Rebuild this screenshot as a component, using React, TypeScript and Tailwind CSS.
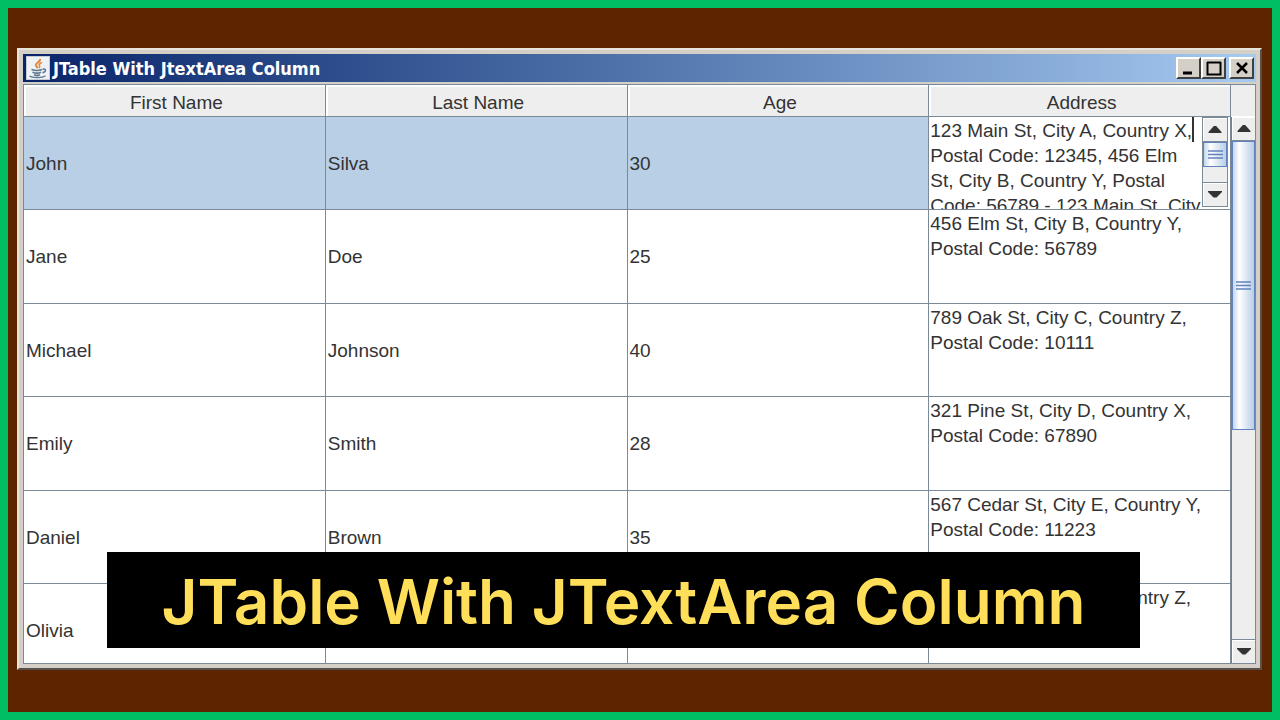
import React, { useState } from 'react';
import clsx from 'clsx';

type Person = {
    first: string;
    last?: string;
    age?: number;
    address: string;
}

const columns = ['First Name', 'Last Name', 'Age', 'Address'];

const people: Person[] = [
    { first: 'John', last: 'Silva', age: 30, address: '123 Main St, City A, Country X, Postal Code: 12345, 456 Elm St, City B, Country Y, Postal Code: 56789 - 123 Main St, City A, Country X' },
    { first: 'Jane', last: 'Doe', age: 25, address: '456 Elm St, City B, Country Y, Postal Code: 56789' },
    { first: 'Michael', last: 'Johnson', age: 40, address: '789 Oak St, City C, Country Z, Postal Code: 10111' },
    { first: 'Emily', last: 'Smith', age: 28, address: '321 Pine St, City D, Country X, Postal Code: 67890' },
    { first: 'Daniel', last: 'Brown', age: 35, address: '567 Cedar St, City E, Country Y, Postal Code: 11223' },
    { first: 'Olivia', address: '890 Birch St, City F, Country Z,' },
];

function JavaIcon() {
    return (
        <svg width="24" height="24" viewBox="0 0 24 24" fill="none" aria-hidden="true">
            <rect x="0.5" y="0.5" width="23" height="23" fill="#eef1f5" stroke="#c5cbd6" />
            <path d="M14 3c1 3-5 4-4 6.500.3.900 1.300 1.600 1.600 2.700" stroke="#e58a3c" strokeWidth="2" />
            <path d="M16 6.500c-2 .8-3.500 1.800-2.500 3.200.6 1 .2 1.800-.6 2.500" stroke="#e58a3c" strokeWidth="1.600" />
            <path d="M5.500 13.500c3 1.200 8 1.200 10.500 0M6.500 16.200c2.500 1 6.500 1 8.500 0M8 18.700c1.800.7 4.500.7 6 0" stroke="#5d7890" strokeWidth="1.600" />
            <path d="M16.500 13.200c4-.9 4 2.600 0 3.500" stroke="#5d7890" strokeWidth="1.500" />
            <path d="M3.500 20c3 2 13 2 16-.3" stroke="#5d7890" strokeWidth="1.400" />
        </svg>
    )
}

function FrameButton({ label, children }: { label: string; children: React.ReactNode }) {
    return (
        <button
            type="button"
            aria-label={label}
            className="flex h-[22px] w-[25px] items-center justify-center border-2 border-t-white border-l-white border-r-[#404040] border-b-[#404040] bg-[#d4d0c8]"
        >
            <svg width="20" height="18" viewBox="0 0 20 18" fill="none" stroke="#000" aria-hidden="true">{children}</svg>
        </button>
    )
}

function ArrowButton({ label, down }: { label: string; down?: boolean }) {
    return (
        <button
            type="button"
            aria-label={label}
            className={clsx(
                'flex h-6 w-full shrink-0 items-center justify-center border-[#7a8a99] bg-[#eeeeee] shadow-[inset_1px_1px_0_#ffffff]',
                down ? 'border-t' : 'border-b'
            )}
        >
            <svg width="14" height="7" viewBox="0 0 14 7" fill="#333333" aria-hidden="true">
                <path d={down ? 'M0 0h14v1L8.500 6.500h-3L0 1z' : 'M5.800 0h2.400L13.500 6v1H.5V6z'} />
            </svg>
        </button>
    )
}

function Thumb({ className }: { className: string }) {
    return (
        <div className={clsx(
            'flex shrink-0 items-center justify-center border border-[#6382bf] bg-linear-to-r from-[#c4d6ea] via-white via-30% to-[#b8cfe5]',
            className
        )}>
            <svg width="15" height="9" viewBox="0 0 15 9" stroke="#6382bf" strokeWidth="1.500" aria-hidden="true">
                <path d="M0 1h15M0 4.500h15M0 8h15" />
            </svg>
        </div>
    )
}

// cell editor of the address column
function AddressEditor({ value, onChange }: { value: string; onChange: (v: string) => void }) {
    return (
        <div className="relative flex h-[92px] bg-white">
            <textarea
                aria-label="Address"
                value={value}
                onChange={e => onChange(e.target.value)}
                className="block h-full min-w-0 flex-1 resize-none overflow-hidden pt-px pl-px leading-[25px] outline-none"
            />
            <span className="absolute top-0 left-[263px] h-[25px] w-0.5 bg-[#333333]" />
            <div className="mr-0.5 mb-0.5 flex w-[26px] flex-col border border-[#7a8a99] bg-[#eeeeee]">
                <ArrowButton label="Scroll address up" />
                <Thumb className="h-[25px]" />
                <div className="flex-1" />
                <ArrowButton label="Scroll address down" down />
            </div>
        </div>
    )
}

function App() {
    const [rows, setRows] = useState(people);

    const setAddress = (index: number, address: string) => {
        setRows(rows.map((row, i) => i === index ? { ...row, address } : row));
    }

    return (
        <div className="relative flex h-screen min-h-96 border-8 border-[#00bf63] bg-[#5e2400] pt-10 pr-2.5 pb-[42px] pl-[9px] font-['Liberation_Sans',Arial,sans-serif] text-[19px] text-[#333333]">
            <main className="flex min-w-0 flex-1 flex-col border-2 border-t-[#e8e4dc] border-r-[#55504a] border-b-[#55504a] border-l-[#e8e4dc] bg-[#d4d0c8] p-1">
                <header className="flex h-7 shrink-0 items-center gap-[3px] bg-linear-to-r from-[#0a246a] to-[#a6caf0] pr-0.5 pl-[3px]">
                    <JavaIcon />
                    <h1 className="flex-1 pt-0.5 font-['DejaVu_Sans_Condensed','DejaVu_Sans',sans-serif] text-[18px] leading-6 font-bold text-white">
                        JTable With JtextArea Column
                    </h1>
                    <div className="flex">
                        <FrameButton label="Minimize"><path d="M4 14h9" strokeWidth="3" /></FrameButton>
                        <FrameButton label="Maximize"><path d="M3 3.500h14M3.500 3v12.500h13V3" strokeWidth="2" /></FrameButton>
                    </div>
                    <FrameButton label="Close"><path d="M5 4l10 10M15 4L5 14" strokeWidth="2.500" /></FrameButton>
                </header>
                <div className="mt-0.5 flex min-h-0 flex-1 border border-[#7a8a99] bg-white">
                    <div className="min-w-0 flex-1 overflow-hidden">
                        <table className="w-full table-fixed border-separate border-spacing-0">
                            <thead>
                                <tr className="h-8">
                                    {columns.map(name => (
                                        <th key={name} scope="col" className="border-r border-b border-[#7a8a99] bg-[#eeeeee] p-0 pt-1 pl-1 leading-6 font-normal shadow-[inset_2px_2px_0_#ffffff]">{name}</th>
                                    ))}
                                </tr>
                            </thead>
                            <tbody>
                                {rows.map((row, i) => (
                                    <tr key={row.first} className={clsx('odd:h-[93px] even:h-[94px]', i === 0 && 'bg-[#b8cfe5]')}>
                                        <td className="border-r border-b border-[#7a8a99] p-0 pt-0.5 pl-0.5">{row.first}</td>
                                        <td className="border-r border-b border-[#7a8a99] p-0 pt-0.5 pl-0.5">{row.last}</td>
                                        <td className="border-r border-b border-[#7a8a99] p-0 pt-0.5 pl-0.5">{row.age}</td>
                                        <td className="border-r border-b border-[#7a8a99] p-0 align-top leading-[25px]">
                                            {i === 0
                                                ? <AddressEditor value={row.address} onChange={v => setAddress(i, v)} />
                                                : <p className="pt-px pl-px">{row.address}</p>}
                                        </td>
                                    </tr>
                                ))}
                            </tbody>
                        </table>
                    </div>
                    <div className="flex w-6 shrink-0 flex-col bg-[#eeeeee]">
                        <div className="h-8 shrink-0 border-b border-white" />
                        <div className="flex min-h-0 flex-1 flex-col border-l border-[#6382bf]">
                            <ArrowButton label="Scroll up" />
                            <div className="min-h-0 flex-1">
                                <Thumb className="h-[58%]" />
                            </div>
                            <ArrowButton label="Scroll down" down />
                        </div>
                    </div>
                </div>
            </main>
            <h2 className="absolute right-[132px] bottom-16 left-[99px] flex h-24 items-center justify-center bg-black pt-0.5 font-['Inter',sans-serif] text-[62px] font-semibold whitespace-nowrap text-[#ffde59]">
                JTable With JTextArea Column
            </h2>
        </div>
    )
}

export default App
